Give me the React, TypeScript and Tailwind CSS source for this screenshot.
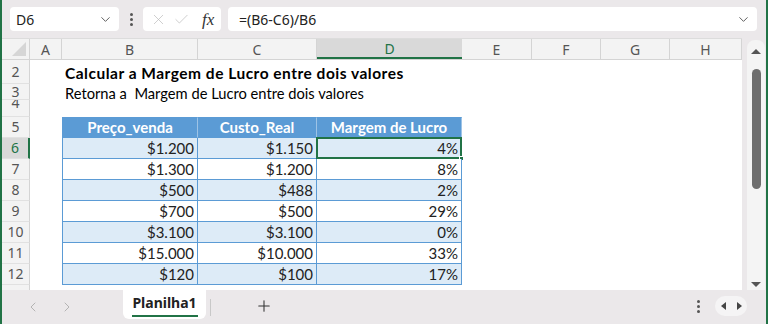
import { ChevronDown, ChevronLeft, ChevronRight, Plus, X, Check } from "lucide-react";

const cols = [
  { l: "A", w: 32 },
  { l: "B", w: 136 },
  { l: "C", w: 119 },
  { l: "D", w: 145 },
  { l: "E", w: 70 },
  { l: "F", w: 69 },
  { l: "G", w: 69 },
  { l: "H", w: 72 },
];

const data = [
  ["$1.200", "$1.150", "4%"],
  ["$1.300", "$1.200", "8%"],
  ["$500", "$488", "2%"],
  ["$700", "$500", "29%"],
  ["$3.100", "$3.100", "0%"],
  ["$15.000", "$10.000", "33%"],
  ["$120", "$100", "17%"],
];

const cellFont = "font-['Lato','Liberation_Sans',sans-serif] text-[15px]";

function RowLabel({ n, h, active, top }: { n?: number; h: string; active?: boolean; top?: boolean }) {
  return (
    <div
      className={`w-[28px] ${h} shrink-0 flex ${top ? "items-start" : "items-center"} justify-center overflow-hidden border-b border-[#e1e1e1] text-[14px] leading-none text-[#555] ${
        active ? "bg-[#d9d9d9] border-r-2 border-r-[#217346] text-[#217346]" : "bg-[#f3f3f3] border-r border-r-[#d4d4d4]"
      }`}
    >
      {top ? <span className="-mt-[4px]">{n}</span> : n}
    </div>
  );
}

function TableRow({ n, vals, band }: { n: number; vals: string[]; band: boolean }) {
  const bg = band ? "bg-[#ddebf7]" : "bg-white";
  return (
    <div className="flex h-[21px]">
      <RowLabel n={n} h="h-[21px]" active={n === 6} />
      <div className="w-[32px]" />
      <div className={`w-[136px] ${bg} border-l border-r border-b border-[#5b9bd5] text-right pr-[3px] ${cellFont} text-[#222] leading-[20px]`}>
        {vals[0]}
      </div>
      <div className={`w-[119px] ${bg} border-r border-b border-[#5b9bd5] text-right pr-[3px] ${cellFont} text-[#222] leading-[20px]`}>
        {vals[1]}
      </div>
      <div className={`relative w-[145px] ${bg} border-r border-b border-[#5b9bd5] text-right pr-[3px] ${cellFont} text-[#222] leading-[20px]`}>
        {vals[2]}
        {n === 6 && (
          <>
            <div className="absolute -left-[1px] -top-[1px] -right-[1px] -bottom-[1px] border-2 border-[#217346]" />
            <div className="absolute -right-[3px] -bottom-[3px] w-[5px] h-[5px] bg-[#217346] border border-white" />
          </>
        )}
      </div>
    </div>
  );
}

export default function App() {
  return (
    <div className="w-[768px] h-[324px] flex flex-col overflow-hidden bg-[#ebe8ea] border-x-2 border-[#217346] font-['Noto_Sans',sans-serif]">
      {/* formula bar */}
      <div className="h-[38px] shrink-0 flex items-center pl-[8px] pr-[9px]">
        <div className="w-[109px] h-[24px] bg-white rounded-[4px] flex items-center justify-between pl-[6px] pr-[6px] text-[14px] text-[#222]">
          <span>D6</span>
          <ChevronDown size={15} strokeWidth={1.5} className="text-[#555]" />
        </div>
        <div className="w-[24px] flex flex-col items-center gap-[2px]">
          <span className="w-[3px] h-[3px] rounded-full bg-[#555]" />
          <span className="w-[3px] h-[3px] rounded-full bg-[#555]" />
          <span className="w-[3px] h-[3px] rounded-full bg-[#555]" />
        </div>
        <div className="w-[78px] h-[24px] bg-white rounded-[4px] flex items-center pl-[7px] gap-[6px]">
          <X size={17} strokeWidth={1} className="text-[#bbb]" />
          <Check size={17} strokeWidth={1} className="text-[#bbb]" />
          <span className="ml-[6px] font-['Liberation_Serif',serif] italic text-[17px] text-[#333] leading-none">fx</span>
        </div>
        <div className="ml-[7px] flex-1 h-[24px] bg-white rounded-[4px] flex items-center justify-between pl-[11px] pr-[6px] text-[14px] text-[#222]">
          <span>=(B6-C6)/B6</span>
          <ChevronDown size={15} strokeWidth={1.5} className="text-[#555]" />
        </div>
      </div>

      {/* sheet */}
      <div className="flex-1 flex min-h-0">
        <div className="w-[740px] flex flex-col bg-white overflow-hidden">
          {/* column headers */}
          <div className="flex h-[22px] shrink-0 bg-[#f3f3f3] border-t border-[#dcdcdc] border-b border-b-[#d4d4d4]">
            <div className="w-[28px] shrink-0 relative border-r border-[#d4d4d4]">
              <div className="absolute right-[3px] bottom-[3px] w-0 h-0 border-l-[14px] border-l-transparent border-b-[14px] border-b-[#d6d6d6]" />
            </div>
            {cols.map((c) => (
              <div
                key={c.l}
                style={{ width: c.w }}
                className={`shrink-0 flex items-center justify-center text-[14px] ${
                  c.l === "D"
                    ? "bg-[#d9d9d9] border-b-2 border-[#217346] text-[#217346]"
                    : "border-r border-[#d4d4d4] text-[#555]"
                }`}
              >
                {c.l}
              </div>
            ))}
          </div>

          {/* rows */}
          <div className="flex h-[24px]">
            <RowLabel n={2} h="h-[24px]" />
            <div className="pl-[35px] pt-[2px] font-['Lato','Liberation_Sans',sans-serif] font-bold text-[15.5px] tracking-[0.5px] text-black whitespace-nowrap">
              Calcular a Margem de Lucro entre dois valores
            </div>
          </div>
          <div className="flex h-[16px]">
            <RowLabel n={3} h="h-[16px]" />
            <div className="pl-[35px] pt-[1px] font-['Lato','Liberation_Sans',sans-serif] text-[14.7px] leading-[17px] text-black whitespace-pre">
              Retorna a  Margem de Lucro entre dois valores
            </div>
          </div>
          <div className="flex h-[17px]">
            <RowLabel n={4} h="h-[17px]" top />
          </div>
          <div className="flex h-[21px]">
            <RowLabel n={5} h="h-[21px]" />
            <div className="w-[32px]" />
            {["Preço_venda", "Custo_Real", "Margem de Lucro"].map((t, i) => (
              <div
                key={t}
                style={{ width: [136, 119, 145][i] }}
                className={`bg-[#5b9bd5] border-t border-b border-r border-[#5b9bd5] ${i === 0 ? "border-l" : ""} border-r-[#9dc3e6] text-center text-white font-bold ${cellFont} leading-[19px]`}
              >
                {t}
              </div>
            ))}
          </div>
          {data.map((r, i) => (
            <TableRow key={i} n={i + 6} vals={r} band={i % 2 === 0} />
          ))}
          <div className="flex h-[21px]">
            <RowLabel h="h-[21px]" />
          </div>
        </div>

        {/* vertical scrollbar */}
        <div className="w-[24px] flex justify-end pr-[1px] pt-[2px]">
          <div className="w-[18px] h-full bg-[#f4f4f4] rounded-t-[8px] flex flex-col items-center">
            <div className="mt-[9px] w-0 h-0 border-l-[5px] border-l-transparent border-r-[5px] border-r-transparent border-b-[5px] border-b-[#555]" />
            <div className="mt-[15px] w-[9px] h-[120px] rounded-full bg-[#6e6e6e]" />
            <div className="mt-auto mb-[3px] w-0 h-0 border-l-[5px] border-l-transparent border-r-[5px] border-r-transparent border-t-[5px] border-t-[#555]" />
          </div>
        </div>
      </div>

      {/* sheet tabs */}
      <div className="h-[34px] shrink-0 flex items-start pr-[19px]">
        <div className="flex items-center h-[34px] pl-[23px] gap-[18px] text-[#aaa]">
          <ChevronLeft size={16} strokeWidth={1.3} />
          <ChevronRight size={16} strokeWidth={1.3} />
        </div>
        <div className="ml-[48px] w-[83px] h-[29px] bg-white rounded-b-[6px] flex flex-col items-center justify-end pb-[2px]">
          <span className="font-['Noto_Sans',sans-serif] font-bold text-[14px] text-[#222] leading-[18px]">Planilha1</span>
          <span className="mt-[3px] w-[66px] h-[2px] bg-[#217346]" />
        </div>
        <div className="mt-[9px] ml-[4px] w-px h-[17px] bg-[#c8c8c8]" />
        <div className="h-[32px] ml-[44px] flex items-center text-[#333]">
          <Plus size={18} strokeWidth={1.4} />
        </div>
        <div className="ml-auto h-[32px] flex items-center gap-[15px]">
          <div className="flex flex-col items-center gap-[2px]">
            <span className="w-[3px] h-[3px] rounded-full bg-[#555]" />
            <span className="w-[3px] h-[3px] rounded-full bg-[#555]" />
            <span className="w-[3px] h-[3px] rounded-full bg-[#555]" />
          </div>
          <div className="w-[32px] h-[20px] rounded-full bg-[#f5f4f5] flex items-center justify-center gap-[11px]">
            <div className="w-0 h-0 border-t-[4px] border-t-transparent border-b-[4px] border-b-transparent border-r-[5px] border-r-[#444]" />
            <div className="w-0 h-0 border-t-[4px] border-t-transparent border-b-[4px] border-b-transparent border-l-[5px] border-l-[#444]" />
          </div>
        </div>
      </div>
    </div>
  );
}
